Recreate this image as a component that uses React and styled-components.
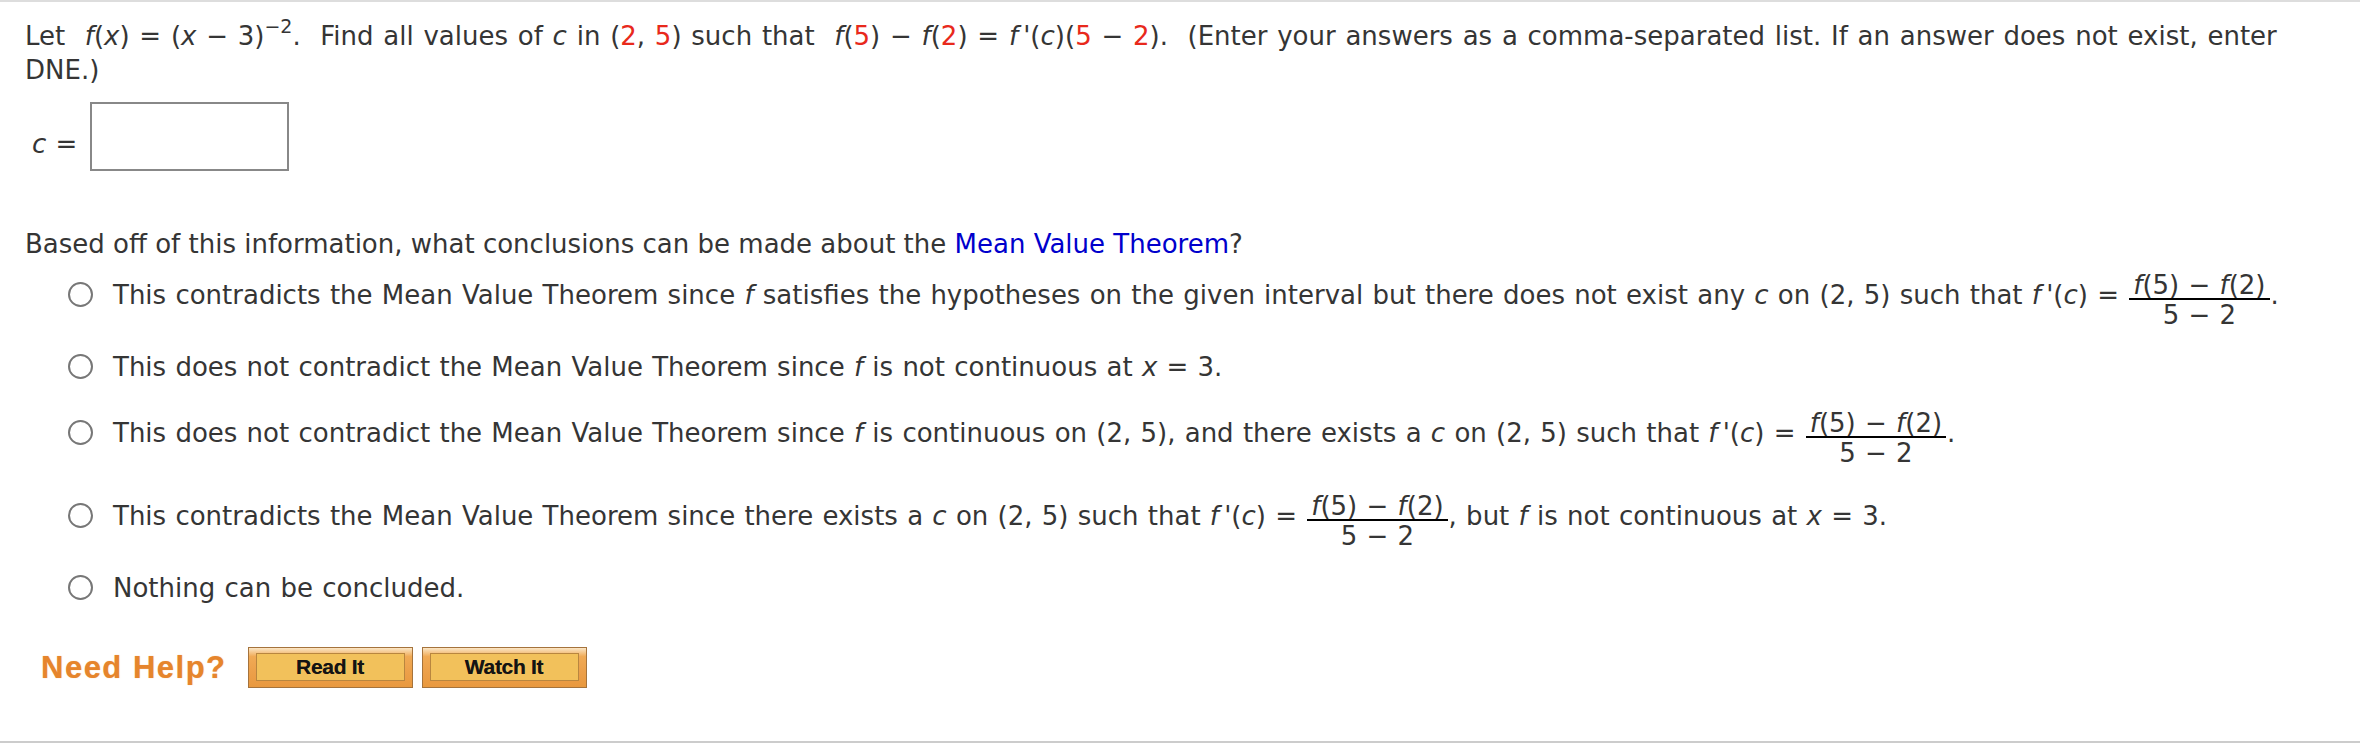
import React from "react";
import styled, { createGlobalStyle } from "styled-components";

const Global = createGlobalStyle`
  html, body { margin: 0; padding: 0; background: #ffffff; }
  body {
    font-family: "DejaVu Sans", Verdana, sans-serif;
    font-size: 26px;
    word-spacing: 1px;
    color: #353535;
  }
`;

const Page = styled.div`
  border-top: 2px solid #dddddd;
  border-bottom: 2px solid #cccccc;
  padding: 17px 60px 53px 25px;
  display: flex;
  flex-direction: column;
`;

const Question = styled.p`
  margin: 0;
  line-height: 34px;
  word-spacing: 1.5px;
`;

const I = styled.i`
  font-style: italic;
`;

const Red = styled.span`
  color: #e8291c;
`;

const Blue = styled.span`
  color: #0000cc;
`;

const Sup = styled.sup`
  font-size: 19px;
  line-height: 0;
  vertical-align: 12px;
`;

const AnswerRow = styled.div`
  display: flex;
  align-items: center;
  gap: 13px;
  margin-top: 15px;
  padding-left: 7px;
`;

const AnswerLabel = styled.label`
  line-height: normal;
  padding-top: 15px;
`;

const AnswerBox = styled.input`
  box-sizing: border-box;
  width: 199px;
  height: 69px;
  border: 2px solid #888888;
  background: #ffffff;
  margin: 0;
  font: inherit;
  padding: 0 8px;
`;

const Prompt = styled.p`
  margin: 58px 0 0 0;
  line-height: normal;
  word-spacing: 0;
`;

const OptionList = styled.div`
  display: flex;
  flex-direction: column;
  gap: 25px;
  margin: 10px 0 0 43px;
`;

const Option = styled.div`
  line-height: normal;
  white-space: nowrap;
`;

const Radio = styled.span`
  display: inline-block;
  box-sizing: border-box;
  width: 25px;
  height: 25px;
  border: 2px solid #777777;
  border-radius: 50%;
  background: #ffffff;
  vertical-align: -2.5px;
  margin-right: 20px;
`;

const Frac = styled.span`
  display: inline-flex;
  flex-direction: column;
  vertical-align: 10px;
  text-align: center;
  margin: 0 1px;
`;

const Num = styled.span`
  line-height: 26px;
  padding: 3px 4px 0 4px;
`;

const Den = styled.span`
  line-height: 23px;
  border-top: 2px solid #000000;
  padding-top: 4px;
`;

const HelpBar = styled.div`
  display: flex;
  align-items: center;
  gap: 9px;
  margin-top: 44px;
  padding-left: 16px;
  word-spacing: 0;
`;

const HelpTitle = styled.span`
  font-family: "Liberation Sans", Arial, sans-serif;
  font-weight: bold;
  font-size: 31px;
  letter-spacing: 1.5px;
  color: #e6852c;
  text-shadow: 0 0 1px rgba(230, 133, 44, 0.6);
  margin-right: 12px;
`;

const HelpButton = styled.button`
  box-sizing: border-box;
  width: 165px;
  height: 41px;
  margin: 0;
  padding: 5px 7px 6px 7px;
  border: 1px solid #a5733c;
  background: linear-gradient(#fbe6c6 0%, #f0aa55 22%, #eca04a 60%, #e9993f 100%);
  cursor: pointer;
  display: flex;
`;

const HelpButtonFace = styled.span`
  flex: 1;
  display: flex;
  align-items: center;
  justify-content: center;
  border: 1px solid #b9863f;
  background: #f2c15b;
  font-family: "Liberation Sans", Arial, sans-serif;
  font-weight: bold;
  font-size: 21px;
  letter-spacing: -0.3px;
  color: #141414;
  text-shadow: 0 0 0.6px rgba(0, 0, 0, 0.6);
`;

const Fraction = () => (
  <Frac>
    <Num>
      <I>f</I>(5) − <I>f</I>(2)
    </Num>
    <Den>5 − 2</Den>
  </Frac>
);

const FPrime = () => (
  <>
    <I>f</I>
    {"\u2009'("}
    <I>c</I>)
  </>
);

export default function App() {
  return (
    <>
      <Global />
      <Page>
        <Question>
          Let{"\u00a0 "}
          <I>f</I>(<I>x</I>) = (<I>x</I> − 3)<Sup>−2</Sup>.{"\u00a0 "}Find all
          values of <I>c</I> in (<Red>2</Red>, <Red>5</Red>) such that
          {"\u00a0 "}
          <I>f</I>(<Red>5</Red>) − <I>f</I>(<Red>2</Red>) = <FPrime />(
          <Red>5</Red> − <Red>2</Red>).{"\u00a0 "}(Enter your answers as a
          comma-separated list. If an answer does not exist, enter DNE.)
        </Question>

        <AnswerRow>
          <AnswerLabel htmlFor="answer-c">
            <I>c</I> =
          </AnswerLabel>
          <AnswerBox id="answer-c" type="text" />
        </AnswerRow>

        <Prompt>
          Based off of this information, what conclusions can be made about the{" "}
          <Blue>Mean Value Theorem</Blue>?
        </Prompt>

        <OptionList>
          <Option>
            <Radio />
            This contradicts the Mean Value Theorem since <I>f</I> satisfies the
            hypotheses on the given interval but there does not exist any <I>c</I>{" "}
            on (2, 5) such that <FPrime /> = <Fraction />.
          </Option>
          <Option>
            <Radio />
            This does not contradict the Mean Value Theorem since <I>f</I> is not
            continuous at <I>x</I> = 3.
          </Option>
          <Option>
            <Radio />
            This does not contradict the Mean Value Theorem since <I>f</I> is
            continuous on (2, 5), and there exists a <I>c</I> on (2, 5) such that{" "}
            <FPrime /> = <Fraction />.
          </Option>
          <Option>
            <Radio />
            This contradicts the Mean Value Theorem since there exists a <I>c</I> on
            (2, 5) such that <FPrime /> = <Fraction />, but <I>f</I> is not
            continuous at <I>x</I> = 3.
          </Option>
          <Option>
            <Radio />
            Nothing can be concluded.
          </Option>
        </OptionList>

        <HelpBar>
          <HelpTitle>Need Help?</HelpTitle>
          <HelpButton type="button">
            <HelpButtonFace>Read It</HelpButtonFace>
          </HelpButton>
          <HelpButton type="button">
            <HelpButtonFace>Watch It</HelpButtonFace>
          </HelpButton>
        </HelpBar>
      </Page>
    </>
  );
}
